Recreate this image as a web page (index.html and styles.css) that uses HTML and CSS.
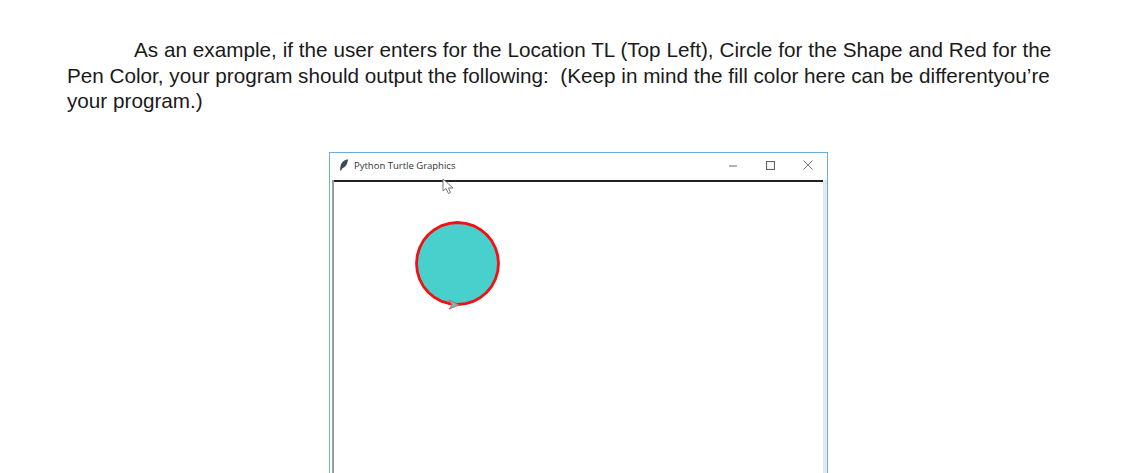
FILE: index.html
```html
<!DOCTYPE html>
<html lang="en">
<head>
<meta charset="utf-8">
<title>Python Turtle Graphics example</title>
<link rel="stylesheet" href="styles.css">
</head>
<body>
<main class="page">
  <p class="para"><span class="first">As an example, if the user enters for the Location TL (Top Left), Circle for the Shape and Red for the</span><br>Pen Color, your program should output the following:&nbsp; (Keep in mind the fill color here can be differentyou’re<br>your program.)</p>
  <section class="window">
    <header class="titlebar">
      <svg class="feather" width="10" height="12" viewBox="0 0 10 12"><path d="M9 0.5C5.5 0.5 2.5 3 1.5 7L1 11.5L2.2 11.5L3.5 9C6.5 8.5 8.5 5 9 0.5Z" fill="#3d4a5a"/></svg>
      <span class="title">Python Turtle Graphics</span>
      <span class="controls">
        <svg width="9" height="9" viewBox="0 0 9 9"><path d="M0 5H8" stroke="#666" stroke-width="1"/></svg>
        <svg width="9" height="9" viewBox="0 0 9 9"><rect x="0.5" y="0.5" width="8" height="8" fill="none" stroke="#666" stroke-width="1.2"/></svg>
        <svg width="10" height="10" viewBox="0 0 10 10"><path d="M0.5 0.5L9.5 9.5M9.5 0.5L0.5 9.5" stroke="#777" stroke-width="1"/></svg>
      </span>
    </header>
    <div class="canvas">
      <svg class="drawing" width="489" height="291" viewBox="0 0 489 291">
        <path d="M164.5 81.5L163.7 89.5L161.4 97.2L157.6 104.3L152.5 110.5L146.3 115.6L139.2 119.4L131.5 121.7L123.5 122.5L115.5 121.7L107.8 119.4L100.7 115.6L94.5 110.5L89.4 104.3L85.6 97.2L83.3 89.5L82.5 81.5L83.3 73.5L85.6 65.8L89.4 58.7L94.5 52.5L100.7 47.4L107.8 43.6L115.5 41.3L123.5 40.5L131.5 41.3L139.2 43.6L146.3 47.4L152.5 52.5L157.6 58.7L161.4 65.8L163.7 73.5Z" fill="#48d1cc" stroke="#f50f14" stroke-width="2.8" stroke-linejoin="round"/>
        <path d="M115 118L125 123L115 127L118 123Z" fill="#6fc0b8" stroke="#d85a5a" stroke-width="1"/>
      </svg>
      <svg class="cursor" width="14" height="17" viewBox="0 0 14 17"><path d="M1 1V13L4 10.5L6.5 15.5L8.5 14.5L6.5 10H11Z" fill="#fff" stroke="#777" stroke-width="1"/></svg>
    </div>
  </section>
</main>
</body>
</html>
```
FILE: styles.css
```css
html, body {
  margin: 0;
  height: 473px;
  overflow: hidden;
  background: #fff;
}
.page {
  padding: 37.4px 0 0 67px;
}
.para {
  margin: 0;
  font: 20.7px/25.2px "Liberation Sans", Arial, sans-serif;
  color: #1a1a1a;
  white-space: nowrap;
}
.first {
  margin-left: 67px;
  word-spacing: 0.1px;
}
.window {
  position: relative;
  box-sizing: border-box;
  width: 499px;
  height: 340px;
  margin: 39px 0 0 262px;
  border: 1px solid #6aaee0;
  border-bottom: 0;
  background: #fff;
}
.titlebar {
  display: flex;
  align-items: center;
  height: 26px;
  padding: 0 14px 2px 9px;
  box-sizing: border-box;
  font: 9.5px "Open Sans", "Liberation Sans", sans-serif;
  color: #333;
}
.feather {
  margin-right: 5px;
}
.controls {
  display: flex;
  align-items: center;
  gap: 28px;
  margin-left: auto;
}
.canvas {
  position: relative;
  box-sizing: border-box;
  height: 314px;
  margin: 1px 0 0 2px;
  border-left: 2px solid #9a9a9a;
  border-right: 4px solid #dfeaf5;
}
.drawing {
  display: block;
  border-top: 2px solid #222;
}
.cursor {
  position: absolute;
  left: 108px;
  top: -2px;
}
```
